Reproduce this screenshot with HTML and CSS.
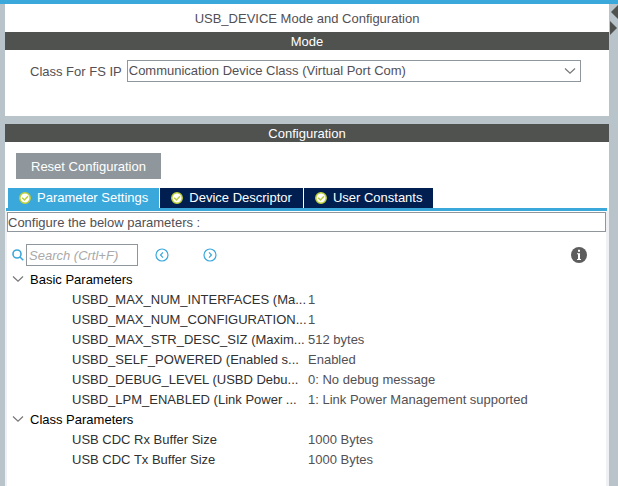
FILE: index.html
```html
<!DOCTYPE html>
<html lang="en">
<head>
<meta charset="utf-8">
<title>USB_DEVICE Mode and Configuration</title>
<link rel="stylesheet" href="styles.css">
</head>
<body>
<div class="workspace">
  <main class="panels">
    <section class="panel mode">
      <h1 class="title">USB_DEVICE Mode and Configuration</h1>
      <h2 class="bar">Mode</h2>
      <div class="field">
        <label for="fs-class">Class For FS IP</label>
        <div class="combo">
          <select id="fs-class"><option>Communication Device Class (Virtual Port Com)</option></select>
          <svg class="chevron combo-arrow" viewBox="0 0 12 8"><path d="M1 1.5 6 6.2 11 1.5"/></svg>
        </div>
      </div>
    </section>
    <section class="panel config">
      <h2 class="bar">Configuration</h2>
      <button class="reset" type="button">Reset Configuration</button>
      <div class="tabs" role="tablist">
        <button class="tab active" type="button" role="tab" aria-selected="true"><svg class="check" viewBox="0 0 12 12"><circle cx="6" cy="6" r="5.2"/><path d="M3.2 5.8 5.4 8 9 4.3"/></svg>Parameter Settings</button>
        <button class="tab" type="button" role="tab" aria-selected="false"><svg class="check" viewBox="0 0 12 12"><circle cx="6" cy="6" r="5.2"/><path d="M3.2 5.8 5.4 8 9 4.3"/></svg>Device Descriptor</button>
        <button class="tab" type="button" role="tab" aria-selected="false"><svg class="check" viewBox="0 0 12 12"><circle cx="6" cy="6" r="5.2"/><path d="M3.2 5.8 5.4 8 9 4.3"/></svg>User Constants</button>
      </div>
      <div class="tab-body">
        <p class="hint">Configure the below parameters :</p>
        <div class="toolbar">
          <label class="search-label" for="search" aria-label="Search"><svg class="magnifier" viewBox="0 0 12 12"><circle cx="5" cy="5" r="4"/><path d="M8 8 11.3 11.3"/></svg></label>
          <input class="search" id="search" type="text" placeholder="Search (Crtl+F)">
          <button class="nav" type="button" aria-label="Previous"><svg viewBox="0 0 14 14"><circle cx="7" cy="7" r="6"/><path d="M8 4.3 5.5 7 8 9.7"/></svg></button>
          <button class="nav next" type="button" aria-label="Next"><svg viewBox="0 0 14 14"><circle cx="7" cy="7" r="6"/><path d="M6 4.3 8.5 7 6 9.7"/></svg></button>
          <button class="info" type="button" aria-label="Information"><svg viewBox="0 0 16 16"><circle cx="8" cy="8" r="8" fill="#5d5d5d"/><path d="M7 2.7h2v2H7zM6 6.3h3v5.7h1V13H6v-1h1V7.3H6z" fill="#fff"/></svg></button>
        </div>
        <table class="params">
          <colgroup><col class="name-col"><col></colgroup>
          <tbody>
            <tr><th class="group" colspan="2" scope="rowgroup"><button type="button" class="toggle" aria-expanded="true"><svg class="chevron" viewBox="0 0 12 8"><path d="M1 1.5 6 6.2 11 1.5"/></svg><span>Basic Parameters</span></button></th></tr>
            <tr><th scope="row">USBD_MAX_NUM_INTERFACES (Ma...</th><td>1</td></tr>
            <tr><th scope="row">USBD_MAX_NUM_CONFIGURATION...</th><td>1</td></tr>
            <tr><th scope="row">USBD_MAX_STR_DESC_SIZ (Maxim...</th><td>512 bytes</td></tr>
            <tr><th scope="row">USBD_SELF_POWERED (Enabled s...</th><td>Enabled</td></tr>
            <tr><th scope="row">USBD_DEBUG_LEVEL (USBD Debu...</th><td>0: No debug message</td></tr>
            <tr><th scope="row">USBD_LPM_ENABLED (Link Power ...</th><td>1: Link Power Management supported</td></tr>
          </tbody>
          <tbody>
            <tr><th class="group" colspan="2" scope="rowgroup"><button type="button" class="toggle" aria-expanded="true"><svg class="chevron" viewBox="0 0 12 8"><path d="M1 1.5 6 6.2 11 1.5"/></svg><span>Class Parameters</span></button></th></tr>
            <tr><th scope="row">USB CDC Rx Buffer Size</th><td>1000 Bytes</td></tr>
            <tr><th scope="row">USB CDC Tx Buffer Size</th><td>1000 Bytes</td></tr>
          </tbody>
        </table>
      </div>
    </section>
  </main>
  <aside class="rail">
    <button type="button" aria-label="Collapse left"><svg viewBox="0 0 8 14"><path d="M8 0v14L1 7z"/></svg></button>
    <button type="button" aria-label="Collapse right"><svg viewBox="0 0 8 14"><path d="M0 0v14L7 7z"/></svg></button>
  </aside>
</div>
</body>
</html>
```
FILE: styles.css
```css
* { box-sizing: border-box; }

body {
  margin: 0;
  background: #b9c4ca;
  color: #525054;
  font: 13px/20px "Liberation Sans", Arial, sans-serif;
}

button, input, select { font: inherit; color: inherit; }

button {
  margin: 0;
  padding: 0;
  border: 0;
  background: none;
}

svg { display: block; flex: none; }

.workspace {
  display: flex;
  min-height: 100vh;
  border-top: 4px solid #3ba8dc;
}

.panels {
  flex: 1;
  min-width: 0;
  display: flex;
  flex-direction: column;
  gap: 8px;
  padding-left: 5px;
}

.panel { background: #fff; }
.mode { padding-bottom: 34px; }

.config {
  flex: 1;
  display: flex;
  flex-direction: column;
}

.title {
  margin: 0;
  padding-top: 2px;
  font-size: 13px;
  font-weight: normal;
  line-height: 26px;
  text-align: center;
}

.bar {
  margin: 0;
  padding-top: 2px;
  background: #50524f;
  color: #fff;
  font-size: 13px;
  font-weight: normal;
  line-height: 16px;
  text-align: center;
}

.field {
  display: flex;
  align-items: center;
  gap: 5px;
  padding: 10px 28px 0 25px;
}

.field label { padding-top: 2px; }

.combo {
  position: relative;
  flex: 1;
}

.combo select {
  display: block;
  width: 100%;
  height: 22px;
  padding: 0 24px 0 1px;
  border: 1px solid #8f969c;
  border-radius: 0;
  background: #fff;
  appearance: none;
}

.chevron {
  width: 12px;
  height: 8px;
  fill: none;
  stroke: #777;
  stroke-width: 1.2;
}

.combo-arrow {
  position: absolute;
  top: 7px;
  right: 5px;
  pointer-events: none;
}

.reset {
  align-self: flex-start;
  margin: 11px 0 9px 11px;
  padding: 2px 15px 0;
  background: #8f979d;
  color: #fff;
  line-height: 24px;
}

.tabs {
  display: flex;
  gap: 1px;
  margin: 0 2px 0 1px;
  padding-left: 2px;
  border-bottom: 3px solid #3ba8dc;
}

.tab {
  display: flex;
  align-items: center;
  gap: 6px;
  padding: 0 11px;
  background: #001f50;
  color: #fff;
  line-height: 20px;
}

.tab.active { background: #3ba8dc; }

.check {
  width: 12px;
  height: 12px;
  fill: #fff;
  stroke: #bccf35;
  stroke-width: 1.5;
}

.tab-body {
  flex: 1;
  padding-top: 1px;
  border: solid #eff0f3;
  border-width: 0 3px 0 2px;
}

.hint {
  margin: 0;
  border: 1px solid #8f969c;
  padding-top: 2px;
  line-height: 16px;
}

.toolbar {
  display: flex;
  align-items: center;
  padding: 12px 19px 3px 5px;
}

.magnifier {
  width: 12px;
  height: 12px;
  margin-right: 2px;
  fill: none;
  stroke: #3ba8dc;
  stroke-width: 1.6;
}

.search {
  width: 112px;
  height: 22px;
  padding: 0 2px;
  border: 1px solid #8f969c;
  border-radius: 0;
  background: #fff;
}

.search::placeholder {
  color: #a9a9a9;
  font-style: italic;
  opacity: 1;
}

.nav { margin-left: 17px; }
.next { margin-left: 34px; }

.nav svg {
  width: 14px;
  height: 14px;
  fill: none;
  stroke: #3ba8dc;
  stroke-width: 1.2;
}

.info { margin-left: auto; }
.info svg { width: 16px; height: 16px; }

.params {
  width: 100%;
  border-collapse: collapse;
  table-layout: fixed;
}

.name-col { width: 301px; }

.params th, .params td {
  height: 20px;
  padding: 2px 0 0;
  font-weight: normal;
  line-height: 18px;
  text-align: left;
  white-space: nowrap;
}

.params th {
  padding-left: 65px;
  color: #303030;
}

.params .group { padding: 0 0 0 5px; }

.toggle {
  display: flex;
  align-items: center;
  gap: 6px;
  color: #000;
}

.toggle span { padding-top: 2px; }

.rail {
  width: 9px;
  display: flex;
  flex-direction: column;
  align-items: flex-end;
  gap: 2px;
  padding-top: 1px;
}

.rail svg {
  width: 8px;
  height: 14px;
  fill: #50524f;
}
```
